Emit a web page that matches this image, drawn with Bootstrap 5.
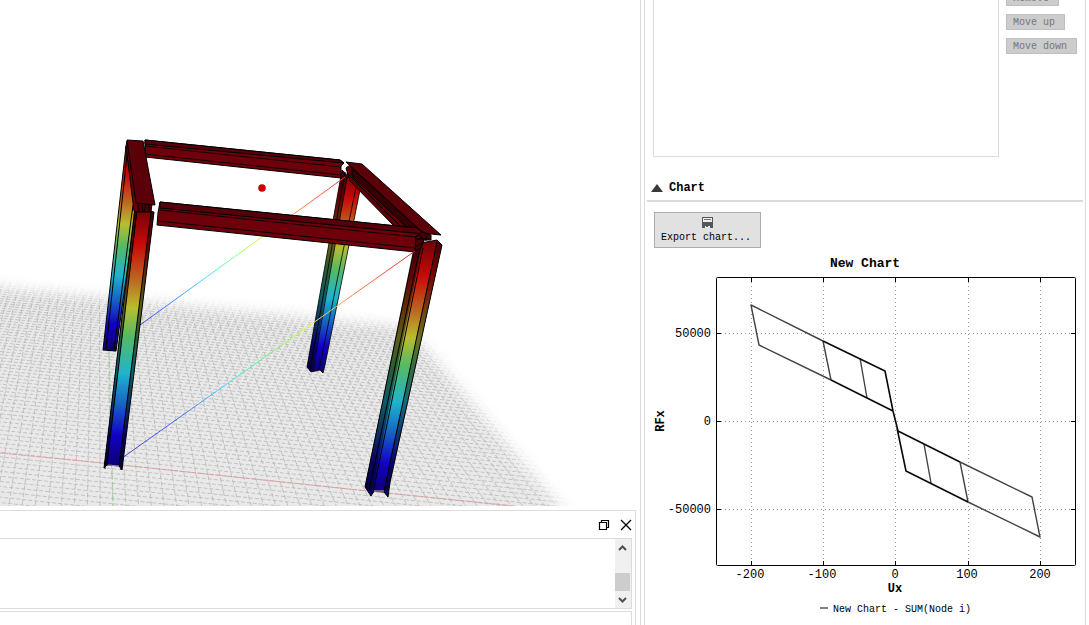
<!DOCTYPE html>
<html lang="en">
<head>
<meta charset="utf-8">
<meta name="viewport" content="width=device-width, initial-scale=1">
<title>Structure viewer</title>
<link rel="stylesheet" href="https://cdn.jsdelivr.net/npm/bootstrap@5.3.0/dist/css/bootstrap.min.css">
<style>
  :root { --line: #dcdcdc; }
  body { font-family: "Liberation Mono", monospace; font-size: 10px; line-height: 14px; color: #000; background: #fff; }
  .workspace { gap: 3px; padding-right: 3px; }
  .viewer-pane { flex: 641 1 641px; min-width: 0; border-right: 1px solid var(--line); padding-right: 4px; gap: 4px; }
  .side-pane { flex: 442 1 442px; min-width: 0; border: solid var(--line); border-width: 0 1px; padding: 0 2px; }
  .scene { min-height: 0; }
  .dock { height: 115px; border: solid var(--line); border-width: 1px 1px 0 0; padding-right: 3px; }
  .dock-head { height: 27px; gap: 10px; }
  .tool { width: 12px; height: 12px; padding: 0; border: 0; border-radius: 0; line-height: 0; }
  .dock-body { height: 71px; border: 1px solid var(--line); border-left: 0; }
  .dock-next { border: solid var(--line); border-width: 1px 1px 0 0; margin-top: 2px; }
  .scroller { width: 16px; background: #f0f0f0; padding-right: 1px; }
  .scroller button { width: 15px; height: 17px; padding: 0; border: 0; border-radius: 0; line-height: 0; }
  .thumb { height: 18px; background: #cdcdcd; margin-top: 17px; }
  .list-row { height: 157px; padding: 0 6px; gap: 7px; }
  .curve-list { border: 1px solid var(--line); border-top: 0; }
  .list-actions { width: 71px; gap: 8px; margin-top: -10px; }
  .list-actions .btn { height: 16px; padding: 1px 9px 0 6px; font-size: 10px; line-height: 14px; border-radius: 0; color: #777; background: #ccc; border-color: #bfbfbf; opacity: 1; white-space: nowrap; }
  .section-head { height: 45px; padding: 18px 4px 0; border-bottom: 2px solid var(--line); font-size: 12px; line-height: 24px; gap: 6px; }
  .export { width: 107px; height: 36px; margin: 10px 0 4px 7px; padding: 4px 6px 0; border-radius: 0; background: #e1e1e1; border-color: #adadad; color: #000; font-size: 10px; line-height: 18px; text-align: left; }
  .plot text { font-size: 12px; }
  .plot .title { font-size: 13px; }
  .plot .legend-text { font-size: 10px; }
</style>
</head>
<body>
<main class="workspace vh-100 d-flex overflow-hidden">
  <section class="viewer-pane d-flex flex-column" aria-label="3D view">
    <svg class="scene flex-fill w-100 d-block" viewBox="0 0 636 506" preserveAspectRatio="xMidYMin slice">
      <defs>
        <linearGradient id="jet" x1="0" y1="0" x2="0" y2="1">
          <stop offset="0" stop-color="#6d0008"/><stop offset=".14" stop-color="#c80a08"/><stop offset=".27" stop-color="#bd6420"/>
          <stop offset=".38" stop-color="#b8bd30"/><stop offset=".49" stop-color="#55b965"/><stop offset=".63" stop-color="#1fb4cc"/>
          <stop offset=".75" stop-color="#1762c4"/><stop offset=".87" stop-color="#1200c4"/><stop offset="1" stop-color="#0c0066"/>
        </linearGradient>
        <linearGradient id="braceBack" gradientUnits="userSpaceOnUse" x1="140" y1="325" x2="345" y2="177">
          <stop offset="0" stop-color="#3838ee"/><stop offset=".25" stop-color="#48b8ff"/><stop offset=".4" stop-color="#55ffcc"/>
          <stop offset=".57" stop-color="#d0ff40"/><stop offset=".72" stop-color="#ff9850"/><stop offset="1" stop-color="#ee3545"/>
        </linearGradient>
        <linearGradient id="braceFront" gradientUnits="userSpaceOnUse" x1="122" y1="458" x2="417" y2="250">
          <stop offset="0" stop-color="#4438cc"/><stop offset=".2" stop-color="#4068f8"/><stop offset=".34" stop-color="#40dcff"/>
          <stop offset=".5" stop-color="#60ff70"/><stop offset=".63" stop-color="#e0ff30"/><stop offset=".76" stop-color="#ff9050"/><stop offset="1" stop-color="#e02535"/>
        </linearGradient>
        <filter id="soft" x="-10%" y="-10%" width="120%" height="120%"><feGaussianBlur stdDeviation="7"/></filter>
        <mask id="fade" maskUnits="userSpaceOnUse" x="0" y="0" width="636" height="506">
          <polygon points="-40,284 408,328 585,535 -40,535" fill="#fff" filter="url(#soft)"/>
        </mask>
      </defs>

      <g mask="url(#fade)">
        <rect y="250" width="636" height="256" fill="#e9e9e9"/>
        <path id="gridDepth" stroke="#b2b2b2" stroke-width=".7" stroke-dasharray="5 2" fill="none"/>
        <path id="gridCross" stroke="#b2b2b2" stroke-width=".7" stroke-dasharray="4 2" fill="none"/>
        <path d="M0 453 112 464 377 492 515 506" stroke="#dc9494" stroke-width=".8" stroke-dasharray="8 1" fill="none"/>
        <path d="M109 350V395L113 506" stroke="#8fd08f" stroke-width=".8" stroke-dasharray="8 3" fill="none"/>
      </g>

      <!-- rear left column -->
      <g stroke="#000">
        <polygon points="126,146 136,204 134,222 116,351 103,350" fill="url(#jet)"/>
        <path d="M128 146 106 349M133 205 114 350" fill="none"/>
      </g>
      <!-- rear right column -->
      <g stroke="#000" stroke-width=".8">
        <polygon points="342,170 360,190 325,365 323,373 320,370 311,372 307,367" fill="url(#jet)"/>
        <polygon points="342,170 348,174 312,370 307,367" fill="#000" fill-opacity=".5" stroke="none"/>
        <path d="M345 172 310 371M348 172 313 370M356 187 319 370" fill="none"/>
      </g>
      <path d="M140 325 345 177" stroke="url(#braceBack)"/>
      <!-- rear beam -->
      <g stroke="#000">
        <polygon points="145,140 340,160 344,163 341,166 341,178 145,157" fill="#6d000b"/>
        <polygon points="145,140 340,160 344,163 145,144" fill="#56000a"/>
        <path d="M145 146 341 167M145 154 341 175" stroke-width=".8"/>
      </g>
      <!-- right beam -->
      <g stroke="#000">
        <polygon points="346,168 350,165 425,235 395,227 350,181" fill="#5c0007"/>
        <polygon points="352,168 426,235 414,234 352,176" fill="#340003"/>
        <path d="M348 174 402 228" fill="none"/>
        <polygon points="346,162 362,164 441,235 431,234 423,233" fill="#5b0008"/>
        <path d="M349 165 424 234" stroke-width=".6"/>
      </g>
      <!-- front right column -->
      <g stroke="#000">
        <polygon points="414,250 421,243 437,240 442,245 390,482 388,497 384,492 374,491 371,496 365,487" fill="url(#jet)"/>
        <polygon points="413,250 422,246 372,492 365,487" fill="#000" fill-opacity=".5" stroke="none"/>
        <polygon points="437,241 442,245 389,490 384,490" fill="#000" fill-opacity=".4" stroke="none"/>
        <path d="M419 252 369 491M423 248 373 493M437 242 384 491" fill="none"/>
        <path d="M374 491H384" stroke="#e8aaaa"/>
      </g>
      <!-- front beam -->
      <g stroke="#000">
        <polygon points="160,202 417,228 426,234 416,238 415,252 157,225 158,213" fill="#6d000b"/>
        <polygon points="160,202 417,228 424,234 160,208" fill="#560009"/>
        <path d="M160 210 416 237M158 221 415 248" stroke-width=".9"/>
        <polygon points="416,236 422,232 431,235 431,240 424,240 421,248 415,251" fill="#480006"/>
        <path d="M417 239H429M420 235 424 242M426 234V241M415 247 423 243" fill="none"/>
      </g>
      <path d="M122 458 415 251" stroke="url(#braceFront)"/>
      <!-- front left column -->
      <g stroke="#000">
        <polygon points="135,208 154,212 122,470 119,466 107,465 104,468" fill="url(#jet)"/>
        <polygon points="134,212 137,212 107,465 104,468" fill="#000" fill-opacity=".5" stroke="none"/>
        <polygon points="151,212 154,213 122,468 119,465" fill="#000" fill-opacity=".5" stroke="none"/>
        <path d="M137 210 107 465M151 212 119 466M105 462V469M121 463V470" fill="none"/>
        <path d="M108 465 119 466" stroke="#9b8fae"/>
      </g>
      <!-- left beam -->
      <g stroke="#000">
        <polygon points="127,141 126,146 134,211 140,212 138,203" fill="#6b000a"/>
        <polygon points="138,203 152,204 151,212 138,212" fill="#4c0006"/>
        <path d="M141 203 143 211M146 204 144 212M149 204V211" fill="none"/>
        <polygon points="127,140 143,141 155,205 136,203" fill="#5b0008"/>
      </g>
      <circle cx="262" cy="188" r="3.8" fill="#c90005"/>
    </svg>

    <div class="dock flex-shrink-0 d-flex flex-column">
      <div class="dock-head d-flex align-items-center justify-content-end">
        <button class="tool btn" aria-label="Float panel"><svg width="12" height="12" fill="none" stroke="#000"><path d="M1.500 3.500H8.500V10.500H1.500ZM3.500 3V1.500H10.500V8.500H9" stroke-width="1.200"/></svg></button>
        <button class="tool btn" aria-label="Close panel"><svg width="12" height="12" stroke="#000" stroke-width="1.300"><path d="M1 1 11 11M11 1 1 11"/></svg></button>
      </div>
      <div class="dock-body d-flex justify-content-end">
        <div class="scroller">
          <button class="btn d-block" aria-label="Scroll up"><svg width="15" height="17" fill="none" stroke="#505050" stroke-width="2"><path d="M4 11 7.500 7.500 11 11"/></svg></button>
          <div class="thumb"></div>
          <button class="btn d-block" aria-label="Scroll down"><svg width="15" height="17" fill="none" stroke="#505050" stroke-width="2"><path d="M4 7 7.500 10.500 11 7"/></svg></button>
        </div>
      </div>
      <div class="dock-next flex-fill"></div>
    </div>
  </section>

  <aside class="side-pane overflow-hidden">
    <div class="list-row d-flex">
      <div class="curve-list flex-fill"></div>
      <div class="list-actions d-flex flex-column align-items-start">
        <button class="btn" disabled>Remove</button>
        <button class="btn" disabled>Move up</button>
        <button class="btn" disabled>Move down</button>
      </div>
    </div>
    <h2 class="section-head d-flex align-items-center fw-bold mb-0">
      <svg width="12" height="8"><path d="M6 0 12 8H0Z" fill="#383a3c"/></svg>
      <span>Chart</span>
    </h2>
    <button class="export btn d-block">
      <svg class="d-block mx-auto" width="11" height="12"><path d="M0 0H11V11H0Z" fill="#55585b"/><path d="M1 1H10V5H1Z" fill="#eee"/><path d="M2 2H9V3H2Z" fill="#1d8df0"/><path d="M3 9H8V11H3Z" fill="#eee"/><path d="M4 9H6V10H4Z" fill="#55585b"/></svg>
      Export chart...
    </button>
    <svg class="plot w-100 d-block" viewBox="647 252 436 373" role="img" aria-label="New Chart">
      <text class="title" x="865" y="267" text-anchor="middle" font-weight="bold">New Chart</text>
      <g stroke="#999" stroke-dasharray="1 3" fill="none">
        <path d="M751.500 278V565M823.500 278V565M895.500 278V565M968.500 278V565M1040.500 278V565M717 333.500H1075M717 421.500H1075M717 509.500H1075"/>
      </g>
      <g stroke="#000" fill="none">
        <rect x="716.500" y="277.500" width="359" height="288" rx="1"/>
        <path d="M751.500 278v4M823.500 278v4M895.500 278v4M968.500 278v4M1040.500 278v4M751.500 565v-4M823.500 565v-4M895.500 565v-4M968.500 565v-4M1040.500 565v-4M717 333.500h4M717 421.500h4M717 509.500h4M1075 333.500h-4M1075 421.500h-4M1075 509.500h-4"/>
      </g>
      <g fill="none" stroke-linejoin="round">
        <path d="M823 341 751 305 759 345 831 380 823 341M860 358 867 398M960 462 1032 497 1040 537 968 502 960 462M924 444 931 483" stroke="#444" stroke-width="1.400"/>
        <path d="M823 341 885 371 893 411 898 431 960 462M831 380 893 411M897 428 906 471 968 502" stroke="#080808" stroke-width="1.600"/>
      </g>
      <g text-anchor="end"><text x="711" y="337">50000</text><text x="711" y="425">0</text><text x="711" y="513">-50000</text></g>
      <g text-anchor="middle">
        <text x="750" y="578">-200</text><text x="822" y="578">-100</text><text x="895" y="578">0</text><text x="967" y="578">100</text><text x="1040" y="578">200</text>
        <text x="895" y="592" font-weight="bold">Ux</text>
        <text transform="translate(664 421) rotate(-90)" font-weight="bold">RFx</text>
      </g>
      <path d="M820 608H828" stroke="#808080" stroke-width="2"/>
      <text class="legend-text" x="833" y="612">New Chart - SUM(Node i)</text>
    </svg>
  </aside>
</main>
<script src="https://cdn.jsdelivr.net/npm/bootstrap@5.3.0/dist/js/bootstrap.bundle.min.js"></script>
<script>
  // Perspective projection of the ground plane; u and v span the frame's footprint.
  const project = (u, v) => {
    const w = -0.00955 * u + 0.2774 * v + 1;
    return ((261.4 * u + 27.24 * v + 112) / w).toFixed(1) + ' ' + ((23.3 * u - 19.46 * v + 464) / w).toFixed(1);
  };
  let depth = '', cross = '';
  for (let i = -22; i <= 42; i++) depth += 'M' + project(i / 22, -0.6) + 'L' + project(i / 22, 1.8);
  for (let j = -19; j <= 58; j++) cross += 'M' + project(-1, j / 32) + 'L' + project(1.9, j / 32);
  document.getElementById('gridDepth').setAttribute('d', depth);
  document.getElementById('gridCross').setAttribute('d', cross);
</script>
</body>
</html>
